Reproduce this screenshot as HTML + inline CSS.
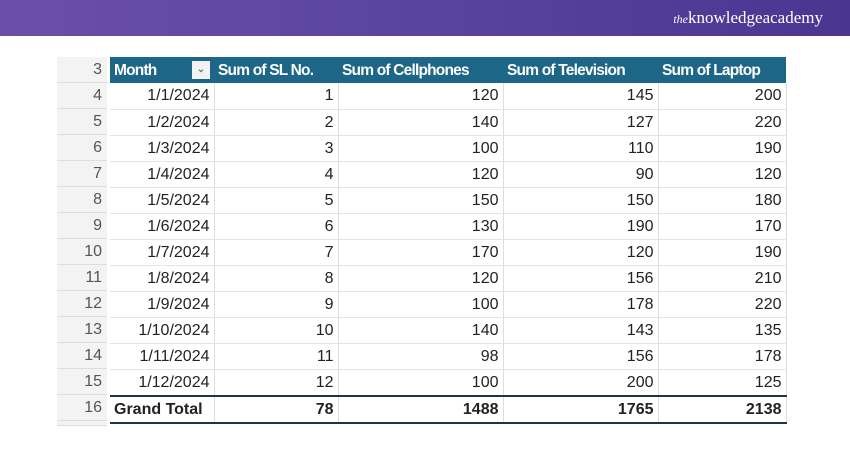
<!DOCTYPE html><html><head><style>
body{margin:0;width:850px;height:450px;background:#fff;position:relative;overflow:hidden;font-family:"Liberation Sans",sans-serif}
.ban{position:absolute;left:0;top:0;width:850px;height:36px;background:linear-gradient(90deg,#6a4fa8,#5a44a0 50%,#4b3591)}
.logo{position:absolute;right:27px;top:8px;color:#fff;font-family:"Liberation Serif",serif;font-size:17px}
.logo i{font-size:12px}
.rn{position:absolute;left:57px;width:50px;height:26px;line-height:26px;background:#f3f3f3;color:#555;text-align:right;font-size:16px;box-sizing:border-box;padding-right:5px;border-bottom:1px solid #ddd}
table{position:absolute;left:110px;top:57px;border-collapse:collapse;table-layout:fixed;width:676px;font-size:16px;color:#222}
td{height:26px;box-sizing:border-box;padding:0 4px;text-align:right;border-right:1px solid #ddd;border-bottom:1px solid #e4e4e4;line-height:25px;white-space:nowrap;overflow:hidden}
tr.h td{background:#1e6688;color:#fff;font-weight:bold;text-align:left;letter-spacing:-0.8px;border-right:none;border-bottom:none;font-size:15.5px}
tr.t td{font-weight:bold;border-top:2px solid #234;border-bottom:2px solid #234}
.dd{position:absolute;left:82px;top:4px;width:18px;height:18px;background:#f2f2f2;color:#777;font-size:10px;text-align:center;line-height:18px;letter-spacing:0}
</style></head><body>
<div class="ban"><div class="logo"><i>the</i>knowledgeacademy</div></div>
<table>
<colgroup><col style="width:104px"><col style="width:124px"><col style="width:165px"><col style="width:155px"><col style="width:128px"></colgroup>
<tr class="h"><td style="position:relative">Month<span class="dd">⌄</span></td><td>Sum of SL No.</td><td>Sum of Cellphones</td><td>Sum of Television</td><td>Sum of Laptop</td></tr>
<tr><td>1/1/2024</td><td>1</td><td>120</td><td>145</td><td>200</td></tr>
<tr><td>1/2/2024</td><td>2</td><td>140</td><td>127</td><td>220</td></tr>
<tr><td>1/3/2024</td><td>3</td><td>100</td><td>110</td><td>190</td></tr>
<tr><td>1/4/2024</td><td>4</td><td>120</td><td>90</td><td>120</td></tr>
<tr><td>1/5/2024</td><td>5</td><td>150</td><td>150</td><td>180</td></tr>
<tr><td>1/6/2024</td><td>6</td><td>130</td><td>190</td><td>170</td></tr>
<tr><td>1/7/2024</td><td>7</td><td>170</td><td>120</td><td>190</td></tr>
<tr><td>1/8/2024</td><td>8</td><td>120</td><td>156</td><td>210</td></tr>
<tr><td>1/9/2024</td><td>9</td><td>100</td><td>178</td><td>220</td></tr>
<tr><td>1/10/2024</td><td>10</td><td>140</td><td>143</td><td>135</td></tr>
<tr><td>1/11/2024</td><td>11</td><td>98</td><td>156</td><td>178</td></tr>
<tr><td>1/12/2024</td><td>12</td><td>100</td><td>200</td><td>125</td></tr>
<tr class="t"><td style="text-align:left">Grand Total</td><td>78</td><td>1488</td><td>1765</td><td>2138</td></tr>
</table>
<div class="rn" style="top:57px">3</div>
<div class="rn" style="top:83px">4</div>
<div class="rn" style="top:109px">5</div>
<div class="rn" style="top:135px">6</div>
<div class="rn" style="top:161px">7</div>
<div class="rn" style="top:187px">8</div>
<div class="rn" style="top:213px">9</div>
<div class="rn" style="top:239px">10</div>
<div class="rn" style="top:265px">11</div>
<div class="rn" style="top:291px">12</div>
<div class="rn" style="top:317px">13</div>
<div class="rn" style="top:343px">14</div>
<div class="rn" style="top:369px">15</div>
<div class="rn" style="top:395px">16</div>
<div class="rn" style="top:421px;height:5px"></div>
</body></html>
